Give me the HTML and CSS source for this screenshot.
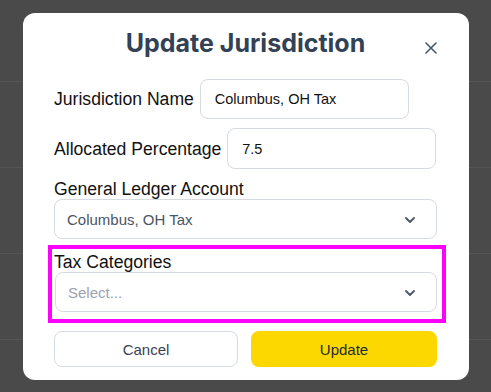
FILE: index.html
```html
<!DOCTYPE html>
<html lang="en">

<head>
    <meta charset="UTF-8">
    <meta name="viewport" content="width=device-width, initial-scale=1.0">
    <title>Update Jurisdiction</title>
    <link rel="stylesheet" href="styles.css">
</head>

<body>
    <div class="page">
        <div class="page-head"></div>
        <div class="page-row"></div>
        <div class="page-row"></div>
        <div class="page-row"></div>
        <div class="page-row"></div>
    </div>

    <div class="modal">
        <div class="modal-header">
            <div class="modal-title">Update Jurisdiction</div>
            <button class="close-btn" aria-label="Close">
                <svg width="12" height="12" viewBox="0 0 12 12">
                    <path d="M1 1L11 11M11 1L1 11" stroke="#475569" stroke-width="1.6" stroke-linecap="round" fill="none"/>
                </svg>
            </button>
        </div>

        <div class="inline-row first">
            <label for="jname">Jurisdiction Name</label>
            <input type="text" id="jname" class="text-input" value="Columbus, OH Tax">
        </div>
        <div class="inline-row second">
            <label for="alloc">Allocated Percentage</label>
            <input type="text" id="alloc" class="text-input" value="7.5">
        </div>

        <div class="field">
            <label>General Ledger Account</label>
            <div class="select">
                <span class="select-value">Columbus, OH Tax</span>
                <svg class="chevron" width="10" height="6" viewBox="0 0 10 6">
                    <path d="M1 1L5 5L9 1" stroke="#4b5563" stroke-width="1.8" stroke-linecap="round" stroke-linejoin="round" fill="none"/>
                </svg>
            </div>
        </div>

        <div class="field highlight">
            <label>Tax Categories</label>
            <div class="select">
                <span class="select-placeholder">Select...</span>
                <svg class="chevron" width="10" height="6" viewBox="0 0 10 6">
                    <path d="M1 1L5 5L9 1" stroke="#4b5563" stroke-width="1.8" stroke-linecap="round" stroke-linejoin="round" fill="none"/>
                </svg>
            </div>
        </div>

        <div class="buttons">
            <button class="btn btn-cancel">Cancel</button>
            <button class="btn btn-update">Update</button>
        </div>
    </div>
</body>

</html>
```

FILE: styles.css
```css
body {
    margin: 0;
    background: #4a4a4a;
    font-family: "Liberation Sans", Arial, sans-serif;
}

.page {
    height: 100vh;
    overflow: hidden;
}

.page-head {
    height: 81px;
    border-bottom: 1px solid #545454;
}

.page-row {
    height: 85px;
    border-bottom: 1px solid #545454;
}

.modal {
    position: fixed;
    left: 23px;
    top: 13px;
    width: 446px;
    height: 367px;
    box-sizing: border-box;
    background: #fff;
    border-radius: 12px;
    padding: 13px 32px 13px 31px;
}

.modal-header {
    position: relative;
    height: 32px;
    margin-top: 1px;
}

.modal-title {
    font-family: Inter, "Noto Sans", sans-serif;
    font-weight: 700;
    font-size: 25px;
    line-height: 32px;
    color: #334155;
    text-align: center;
    margin-left: -8px;
    margin-right: -8px;
}

.close-btn {
    position: absolute;
    right: -4px;
    top: 11px;
    width: 20px;
    height: 20px;
    padding: 0;
    border: none;
    background: none;
    display: flex;
    align-items: center;
    justify-content: center;
}

.inline-row {
    display: flex;
    align-items: center;
    gap: 6px;
}

.inline-row.first {
    margin-top: 20px;
}

.inline-row.second {
    margin-top: 9px;
}

label {
    font-size: 17.6px;
    line-height: 20px;
    color: #111;
    white-space: nowrap;
}

.text-input {
    width: 209px;
    height: 40px;
    box-sizing: border-box;
    border: 1px solid #d6dae1;
    border-radius: 8px;
    padding: 0 14px;
    font-family: "Liberation Sans", Arial, sans-serif;
    font-size: 14.5px;
    color: #111;
    outline: none;
}

.inline-row.second .text-input {
    height: 41px;
}

.field {
    margin-top: 10px;
}

.field label {
    display: block;
}

.select {
    height: 40px;
    box-sizing: border-box;
    border: 1px solid #d6dae1;
    border-radius: 8px;
    display: flex;
    align-items: center;
    justify-content: space-between;
    padding: 0 21px 0 12px;
    font-size: 15px;
}

.select-value {
    color: #4b5563;
}

.select-placeholder {
    color: #9ca3af;
}

.chevron {
    margin-top: 1px;
}

.field.highlight {
    margin: 6px -9px 0 -6px;
    border: 4px solid #ff00ff;
    padding: 3px 5px 7px 2px;
}

.field.highlight .select {
    margin-left: 1px;
}

.buttons {
    display: flex;
    gap: 13px;
    margin-top: 8px;
}

.btn {
    height: 36px;
    border-radius: 8px;
    font-family: "Liberation Sans", Arial, sans-serif;
    font-size: 15px;
    cursor: pointer;
}

.btn-cancel {
    flex: 0 0 184px;
    background: #fff;
    border: 1px solid #d6dae1;
    color: #374151;
}

.btn-update {
    flex: 1;
    background: #fcd800;
    border: none;
    color: #1f2937;
}
```
